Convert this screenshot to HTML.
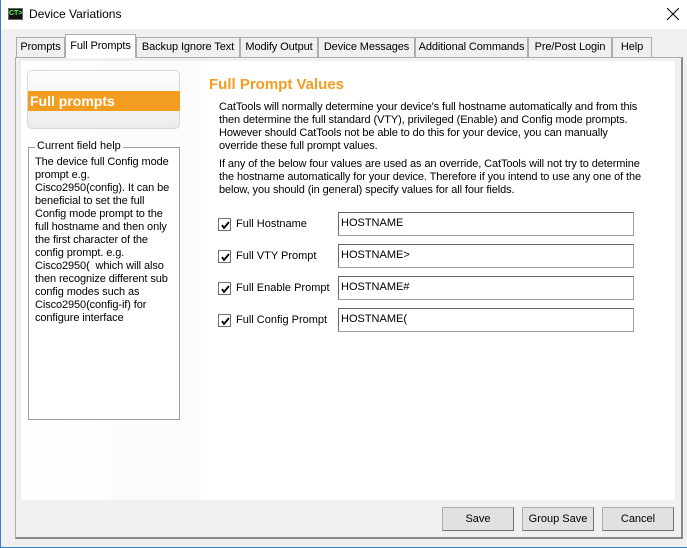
<!DOCTYPE html><html><head><style>
*{margin:0;padding:0;box-sizing:border-box}
body{width:687px;height:548px;background:#f0f0f0;font-family:"Liberation Sans",Arial,sans-serif;font-size:11px;color:#000;position:relative;overflow:hidden;border-left:1px solid #3c7fc0;border-bottom:1px solid #3c7fc0;white-space:nowrap}
.a{position:absolute}
.title{left:0;top:0;width:687px;height:29px;background:#fff}
.tab{position:absolute;top:37px;height:20px;border:1px solid #adadad;border-bottom:none;background:#f0f0f0;font-size:11px;line-height:18px;text-align:center;letter-spacing:-0.1px}
.tab.act{top:34px;height:24px;background:#fff;z-index:2;line-height:22px}
.panel{left:14px;top:57px;width:668px;height:482px;border:1px solid #adadad;border-right:2px solid #8a8a8a;border-bottom:2px solid #8a8a8a;background:#f0f0f0}
.white{left:20px;top:61px;width:654px;height:439px;background:#fff}
.btn{position:absolute;top:507px;width:72px;height:24px;background:#e1e1e1;border:1px solid #adadad;border-right-color:#707070;border-bottom-color:#707070;text-align:center;line-height:22px;font-size:11px}
.cb{position:absolute;left:217px;width:13px;height:13px;border:1px solid #707070;background:#fff}
.cb svg{position:absolute;left:1px;top:1px}
.lbl{position:absolute;left:235px;font-size:11px}
.inp{position:absolute;left:337px;width:296px;height:24px;border:1px solid #a0a0a0;border-top-color:#696969;border-left-color:#696969;background:#fff;padding:1px 2px;font-size:11px;line-height:18px}
p{line-height:13px}
</style></head><body>
<div class="a title"></div>
<div class="a" style="left:7px;top:8px;width:15px;height:12px;background:#111;border:1px solid #666;color:#5f5;font-size:7px;line-height:10px;font-weight:bold;text-align:center">CT&gt;</div>
<div class="a" style="left:28px;top:7px;font-size:12px">Device Variations</div>
<svg class="a" style="left:666px;top:8px" width="12" height="12"><path d="M0 0L12 12M12 0L0 12" stroke="#000" stroke-width="1"/></svg>
<div class="a panel"></div>
<div class="tab" style="left:15px;width:49px">Prompts</div>
<div class="tab act" style="left:64px;width:71px">Full Prompts</div>
<div class="tab" style="left:135px;width:104px">Backup Ignore Text</div>
<div class="tab" style="left:239px;width:78px">Modify Output</div>
<div class="tab" style="left:317px;width:97px">Device Messages</div>
<div class="tab" style="left:414px;width:113px">Additional Commands</div>
<div class="tab" style="left:527px;width:84px">Pre/Post Login</div>
<div class="tab" style="left:611px;width:40px">Help</div>
<div class="a white"></div>
<div class="a" style="left:20px;top:61px;width:180px;height:439px;background:linear-gradient(90deg,#fefefe,#fbfbfb)"></div>
<div class="a" style="left:26px;top:70px;width:153px;height:59px;border:1px solid #d8d8d8;border-radius:5px;background:linear-gradient(#fdfdfd,#ececec)"></div>
<div class="a" style="left:27px;top:91px;width:152px;height:20px;background:#f29c20;color:#fff;font-weight:bold;font-size:14px;line-height:20px;padding-left:2px">Full prompts</div>
<div class="a" style="left:27px;top:147px;width:152px;height:273px;border:1px solid #a0a0a0;background:#fff"></div>
<div class="a" style="left:34px;top:140px;background:#fff;padding:0 2px;font-size:11px;line-height:13px">Current field help</div>
<div class="a" style="left:34px;top:156px;font-size:11px;line-height:13px;letter-spacing:-0.1px">The device full Config mode<br>prompt e.g.<br>Cisco2950(config). It can be<br>beneficial to set the full<br>Config mode prompt to the<br>full hostname and then only<br>the first character of the<br>config prompt. e.g.<br>Cisco2950(&nbsp; which will also<br>then recognize different sub<br>config modes such as<br>Cisco2950(config-if) for<br>configure interface</div>
<div class="a" style="left:208px;top:76px;color:#f29c20;font-weight:bold;font-size:15px">Full Prompt Values</div>
<div class="a" style="left:218px;top:101px;font-size:11px;letter-spacing:-0.1px">
<p>CatTools will normally determine your device's full hostname automatically and from this<br>then determine the full standard (VTY), privileged (Enable) and Config mode prompts.<br>However should CatTools not be able to do this for your device, you can manually<br>override these full prompt values.</p>
<p style="margin-top:5px">If any of the below four values are used as an override, CatTools will not try to determine<br>the hostname automatically for your device. Therefore if you intend to use any one of the<br>below, you should (in general) specify values for all four fields.</p></div>
<div class="cb" style="top:218px"><svg width="11" height="11"><path d="M2 5l2 3 5-6" stroke="#000" stroke-width="1.8" fill="none"/></svg></div>
<div class="lbl" style="top:218px">Full Hostname</div>
<div class="inp" style="top:212px">HOSTNAME</div>
<div class="cb" style="top:250px"><svg width="11" height="11"><path d="M2 5l2 3 5-6" stroke="#000" stroke-width="1.8" fill="none"/></svg></div>
<div class="lbl" style="top:250px">Full VTY Prompt</div>
<div class="inp" style="top:244px">HOSTNAME&gt;</div>
<div class="cb" style="top:282px"><svg width="11" height="11"><path d="M2 5l2 3 5-6" stroke="#000" stroke-width="1.8" fill="none"/></svg></div>
<div class="lbl" style="top:282px">Full Enable Prompt</div>
<div class="inp" style="top:276px">HOSTNAME#</div>
<div class="cb" style="top:314px"><svg width="11" height="11"><path d="M2 5l2 3 5-6" stroke="#000" stroke-width="1.8" fill="none"/></svg></div>
<div class="lbl" style="top:314px">Full Config Prompt</div>
<div class="inp" style="top:308px">HOSTNAME(</div>
<div class="btn" style="left:441px">Save</div>
<div class="btn" style="left:521px">Group Save</div>
<div class="btn" style="left:601px">Cancel</div>
</body></html>
